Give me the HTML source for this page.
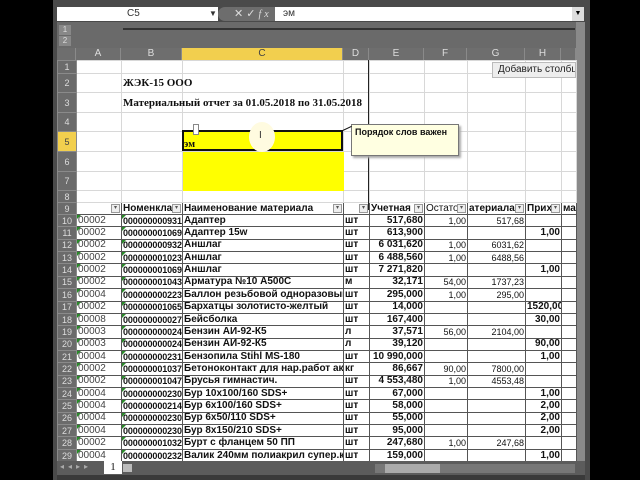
<!DOCTYPE html>
<html><head><meta charset="utf-8"><style>
*{margin:0;padding:0;box-sizing:border-box}
body{width:640px;height:480px;background:#000;position:relative;overflow:hidden;font-family:"Liberation Sans",sans-serif}
.a{position:absolute}
table{position:absolute;left:57px;top:60px;border-collapse:collapse;table-layout:fixed;width:519px;font:bold 10px "Liberation Sans",sans-serif;background:#fff;color:#111}
td{padding:0 1px;overflow:hidden;white-space:nowrap;border:1px solid #d8d8d8;line-height:10px;position:relative}
td.h{background:#6b6b6b;color:#ddd;text-align:center;font-weight:normal;font-size:9px;border-color:#8a8a8a;padding:0}
tr.t td{border-color:#555}
tr.t td.h{border-color:#8a8a8a}
td.n{font-weight:normal;color:#444}
td.r{text-align:right}
td.s{text-align:right;font-weight:normal;font-size:9px}
td.g{font-size:9px;letter-spacing:-0.1px}
td.g:before,td.n:before{content:"";position:absolute;left:0;top:0;border-top:4px solid #2a8a2a;border-right:4px solid transparent}
.f{position:absolute;right:1px;top:1px;width:9px;height:9px;background:#eee;border:1px solid #999;font-size:6px;line-height:7px;text-align:center;color:#555;font-weight:normal}
.ch{position:absolute;top:48px;height:12px;background:#6e6e6e;color:#ddd;font-size:10px;text-align:center;line-height:12px;border-right:1px solid #8a8a8a}
</style></head><body>
<div class="a" style="left:53px;top:0;width:537px;height:480px;background:#4a4a4a"></div>
<div class="a" style="left:57px;top:7px;width:161px;height:14px;background:#fff;font-size:10px;line-height:14px;color:#333;padding-left:70px">C5<span style="position:absolute;left:152px;font-size:8px">▼</span></div>
<div class="a" style="left:218px;top:7px;width:57px;height:14px;background:#6d6d6d;border-radius:7px 0 0 7px;color:#ddd;font-size:11px;line-height:14px;padding-left:16px;letter-spacing:3px">✕✓<i style="font-family:'Liberation Serif';font-size:10px">fx</i></div>
<div class="a" style="left:275px;top:7px;width:297px;height:14px;background:#fff;font-size:10px;line-height:14px;padding-left:8px;color:#333">эм</div>
<div class="a" style="left:572px;top:7px;width:12px;height:14px;background:#ddd;font-size:7px;text-align:center;line-height:14px">▼</div>
<div class="a" style="left:57px;top:22px;width:528px;height:26px;background:#6a6a6a"></div>
<div class="a" style="left:59px;top:25px;width:12px;height:10px;background:#888;color:#ddd;font-size:8px;text-align:center;line-height:10px">1</div>
<div class="a" style="left:59px;top:36px;width:12px;height:10px;background:#888;color:#ddd;font-size:8px;text-align:center;line-height:10px">2</div>
<div class="a" style="left:123px;top:28px;width:452px;height:2px;background:#333"></div>
<div class="a" style="left:576px;top:22px;width:9px;height:440px;background:#8a8a8a"></div>
<div class="ch" style="left:57px;width:19px"></div>
<div class="ch" style="left:76px;width:45px">A</div>
<div class="ch" style="left:121px;width:61px">B</div>
<div class="ch" style="left:182px;width:161px;background:#f2cf4e;color:#444">C</div>
<div class="ch" style="left:343px;width:26px">D</div>
<div class="ch" style="left:369px;width:55px">E</div>
<div class="ch" style="left:424px;width:43px">F</div>
<div class="ch" style="left:467px;width:58px">G</div>
<div class="ch" style="left:525px;width:36px">H</div>
<div class="ch" style="left:561px;width:15px"></div>
<table>
<colgroup><col style="width:19px"><col style="width:45px"><col style="width:61px"><col style="width:161px"><col style="width:26px"><col style="width:55px"><col style="width:43px"><col style="width:58px"><col style="width:36px"><col style="width:15px"></colgroup>
<tr style="height:13px"><td class="h">1</td><td></td><td></td><td></td><td></td><td></td><td></td><td></td><td></td><td></td></tr>
<tr style="height:19px"><td class="h">2</td><td></td><td></td><td></td><td></td><td></td><td></td><td></td><td></td><td></td></tr>
<tr style="height:20px"><td class="h">3</td><td></td><td></td><td></td><td></td><td></td><td></td><td></td><td></td><td></td></tr>
<tr style="height:19px"><td class="h">4</td><td></td><td></td><td></td><td></td><td></td><td></td><td></td><td></td><td></td></tr>
<tr style="height:20px"><td class="h" style="background:#f2cf4e;color:#444">5</td><td></td><td></td><td style="background:#ff0"></td><td></td><td></td><td></td><td></td><td></td><td></td></tr>
<tr style="height:20px"><td class="h">6</td><td></td><td></td><td style="background:#ff0;border-color:#ff0"></td><td></td><td></td><td></td><td></td><td></td><td></td></tr>
<tr style="height:19px"><td class="h">7</td><td></td><td></td><td style="background:#ff0;border-color:#ff0"></td><td></td><td></td><td></td><td></td><td></td><td></td></tr>
<tr style="height:12px"><td class="h">8</td><td></td><td></td><td></td><td></td><td></td><td></td><td></td><td></td><td></td></tr>
<tr class="t" style="height:12px"><td class="h">9</td><td><span class="f">▾</span></td><td>Номенкла<span class="f">▾</span></td><td>Наименование материала<span class="f">▾</span></td><td><span class="f">▾</span></td><td>Учетная<span class="f">▾</span></td><td style="font-weight:normal">Остато<span class="f">▾</span></td><td>атериала<span class="f">▾</span></td><td>Прихо<span class="f">▾</span></td><td>мате</td></tr>
<tr class="t" style="height:12.37px"><td class="h">10</td><td class="n">00002</td><td class="g">000000000931</td><td>Адаптер</td><td>шт</td><td class="r">517,680</td><td class="s">1,00</td><td class="s">517,68</td><td class="r"></td><td></td></tr>
<tr class="t" style="height:12.37px"><td class="h">11</td><td class="n">00002</td><td class="g">000000001069</td><td>Адаптер 15w</td><td>шт</td><td class="r">613,900</td><td class="s"></td><td class="s"></td><td class="r">1,00</td><td></td></tr>
<tr class="t" style="height:12.37px"><td class="h">12</td><td class="n">00002</td><td class="g">000000000932</td><td>Аншлаг</td><td>шт</td><td class="r">6 031,620</td><td class="s">1,00</td><td class="s">6031,62</td><td class="r"></td><td></td></tr>
<tr class="t" style="height:12.37px"><td class="h">13</td><td class="n">00002</td><td class="g">000000001023</td><td>Аншлаг</td><td>шт</td><td class="r">6 488,560</td><td class="s">1,00</td><td class="s">6488,56</td><td class="r"></td><td></td></tr>
<tr class="t" style="height:12.37px"><td class="h">14</td><td class="n">00002</td><td class="g">000000001069</td><td>Аншлаг</td><td>шт</td><td class="r">7 271,820</td><td class="s"></td><td class="s"></td><td class="r">1,00</td><td></td></tr>
<tr class="t" style="height:12.37px"><td class="h">15</td><td class="n">00002</td><td class="g">000000001043</td><td>Арматура №10 А500С</td><td>м</td><td class="r">32,171</td><td class="s">54,00</td><td class="s">1737,23</td><td class="r"></td><td></td></tr>
<tr class="t" style="height:12.37px"><td class="h">16</td><td class="n">00004</td><td class="g">000000000223</td><td>Баллон резьбовой одноразовый</td><td>шт</td><td class="r">295,000</td><td class="s">1,00</td><td class="s">295,00</td><td class="r"></td><td></td></tr>
<tr class="t" style="height:12.37px"><td class="h">17</td><td class="n">00002</td><td class="g">000000001065</td><td>Бархатцы золотисто-желтый</td><td>шт</td><td class="r">14,000</td><td class="s"></td><td class="s"></td><td class="r">1520,00</td><td></td></tr>
<tr class="t" style="height:12.37px"><td class="h">18</td><td class="n">00008</td><td class="g">000000000027</td><td>Бейсболка</td><td>шт</td><td class="r">167,400</td><td class="s"></td><td class="s"></td><td class="r">30,00</td><td></td></tr>
<tr class="t" style="height:12.37px"><td class="h">19</td><td class="n">00003</td><td class="g">000000000024</td><td>Бензин АИ-92-К5</td><td>л</td><td class="r">37,571</td><td class="s">56,00</td><td class="s">2104,00</td><td class="r"></td><td></td></tr>
<tr class="t" style="height:12.37px"><td class="h">20</td><td class="n">00003</td><td class="g">000000000024</td><td>Бензин АИ-92-К5</td><td>л</td><td class="r">39,120</td><td class="s"></td><td class="s"></td><td class="r">90,00</td><td></td></tr>
<tr class="t" style="height:12.37px"><td class="h">21</td><td class="n">00004</td><td class="g">000000000231</td><td>Бензопила Stihl MS-180</td><td>шт</td><td class="r">10 990,000</td><td class="s"></td><td class="s"></td><td class="r">1,00</td><td></td></tr>
<tr class="t" style="height:12.37px"><td class="h">22</td><td class="n">00002</td><td class="g">000000001037</td><td>Бетоноконтакт для нар.работ акр</td><td>кг</td><td class="r">86,667</td><td class="s">90,00</td><td class="s">7800,00</td><td class="r"></td><td></td></tr>
<tr class="t" style="height:12.37px"><td class="h">23</td><td class="n">00002</td><td class="g">000000001047</td><td>Брусья гимнастич.</td><td>шт</td><td class="r">4 553,480</td><td class="s">1,00</td><td class="s">4553,48</td><td class="r"></td><td></td></tr>
<tr class="t" style="height:12.37px"><td class="h">24</td><td class="n">00004</td><td class="g">000000000230</td><td>Бур 10х100/160 SDS+</td><td>шт</td><td class="r">67,000</td><td class="s"></td><td class="s"></td><td class="r">1,00</td><td></td></tr>
<tr class="t" style="height:12.37px"><td class="h">25</td><td class="n">00004</td><td class="g">000000000214</td><td>Бур 6х100/160 SDS+</td><td>шт</td><td class="r">58,000</td><td class="s"></td><td class="s"></td><td class="r">2,00</td><td></td></tr>
<tr class="t" style="height:12.37px"><td class="h">26</td><td class="n">00004</td><td class="g">000000000230</td><td>Бур 6х50/110 SDS+</td><td>шт</td><td class="r">55,000</td><td class="s"></td><td class="s"></td><td class="r">2,00</td><td></td></tr>
<tr class="t" style="height:12.37px"><td class="h">27</td><td class="n">00004</td><td class="g">000000000230</td><td>Бур 8х150/210 SDS+</td><td>шт</td><td class="r">95,000</td><td class="s"></td><td class="s"></td><td class="r">2,00</td><td></td></tr>
<tr class="t" style="height:12.37px"><td class="h">28</td><td class="n">00002</td><td class="g">000000001032</td><td>Бурт с фланцем 50 ПП</td><td>шт</td><td class="r">247,680</td><td class="s">1,00</td><td class="s">247,68</td><td class="r"></td><td></td></tr>
<tr class="t" style="height:12.37px"><td class="h">29</td><td class="n">00004</td><td class="g">000000000232</td><td>Валик 240мм полиакрил супер.кр</td><td>шт</td><td class="r">159,000</td><td class="s"></td><td class="s"></td><td class="r">1,00</td><td></td></tr>
</table>
<div class="a" style="left:123px;top:77px;font:bold 11px 'Liberation Serif',serif;color:#111">ЖЭК-15 ООО</div>
<div class="a" style="left:123px;top:97px;font:bold 11px 'Liberation Serif',serif;color:#111;white-space:nowrap">Материальный отчет за 01.05.2018 по 31.05.2018</div>
<div class="a" style="left:492px;top:62px;width:84px;height:16px;background:#eee;border:1px solid #bbb;font-size:10px;line-height:14px;padding-left:5px;color:#222;white-space:nowrap;overflow:hidden">Добавить столбц</div>
<div class="a" style="left:182px;top:130px;width:161px;height:21px;border:2px solid #111"></div>
<div class="a" style="left:184px;top:139px;font:bold 10px 'Liberation Serif',serif;color:#111">эм</div>
<div class="a" style="left:249px;top:122px;width:26px;height:30px;border-radius:50%;background:#fffbe0"></div>
<div class="a" style="left:259px;top:130px;font-size:10px;color:#333">I</div>
<div class="a" style="left:193px;top:124px;width:6px;height:11px;background:#fff;border:1px solid #888"></div>
<div class="a" style="left:368px;top:60px;width:1px;height:150px;background:#222"></div>
<div class="a" style="left:351px;top:124px;width:108px;height:32px;background:#ffffe1;border:1px solid #777;box-shadow:2px 2px 2px #aaa;font:bold 9px 'Liberation Sans',sans-serif;padding:2px 3px;color:#111">Порядок слов важен</div>
<div class="a" style="left:342px;top:128px;width:10px;height:1px;background:#111;transform:rotate(-25deg)"></div>
<div class="a" style="left:57px;top:461px;width:528px;height:14px;background:#5c5c5c"></div>
<div class="a" style="left:60px;top:462px;color:#aaa;font-size:8px;letter-spacing:4px">◂◂▸▸</div>
<div class="a" style="left:104px;top:461px;width:18px;height:13px;background:#fff;font:11px 'Liberation Serif',serif;text-align:center;color:#111">1</div>
<div class="a" style="left:123px;top:464px;width:9px;height:8px;background:#bbb"></div>
<div class="a" style="left:375px;top:464px;width:200px;height:9px;background:#777"></div>
<div class="a" style="left:385px;top:464px;width:55px;height:9px;background:#aaa"></div>
<div class="a" style="left:57px;top:475px;width:528px;height:5px;background:#3a3a3a"></div>
</body></html>
